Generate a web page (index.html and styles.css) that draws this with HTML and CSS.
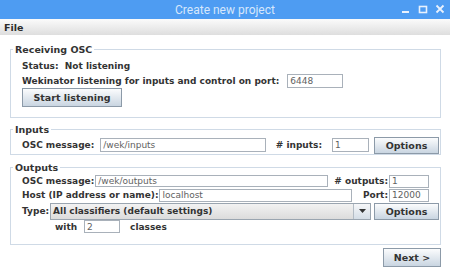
FILE: index.html
```html
<!DOCTYPE html>
<html>
<head>
<meta charset="utf-8">
<link rel="stylesheet" href="styles.css">
</head>
<body>
<div class="window">
  <div class="titlebar">
    <span class="title">Create new project</span>
    <div class="winctl">
      <svg width="10" height="10" viewBox="0 0 10 10"><rect x="1" y="7" width="7" height="2" fill="#e8f1fd"/></svg>
      <svg width="10" height="10" viewBox="0 0 10 10"><rect x="1.5" y="2.5" width="7" height="6" fill="none" stroke="#e8f1fd" stroke-width="1.6"/></svg>
      <svg width="10" height="10" viewBox="0 0 10 10"><path d="M1.5 1.5 L8.5 8.5 M8.5 1.5 L1.5 8.5" stroke="#e8f1fd" stroke-width="1.8"/></svg>
    </div>
  </div>
  <div class="menubar"><span class="menu">File</span></div>
  <div class="content">
    <fieldset class="group g-recv">
      <legend>Receiving OSC</legend>
      <div class="line status">Status:&nbsp; Not listening</div>
      <div class="row r-port">
        <span class="label">Wekinator listening for inputs and control on port:</span>
        <input class="field f-port" type="text" value="6448">
      </div>
      <button class="btn b-start">Start listening</button>
    </fieldset>

    <fieldset class="group g-inputs">
      <legend>Inputs</legend>
      <div class="row r-inputs">
        <span class="label">OSC message:</span>
        <input class="field f-oscin" type="text" value="/wek/inputs">
        <span class="label l-nin"># inputs:</span>
        <input class="field f-nin" type="text" value="1">
        <button class="btn b-opt">Options</button>
      </div>
    </fieldset>

    <fieldset class="group g-outputs">
      <legend>Outputs</legend>
      <div class="row r-out1">
        <span class="label">OSC message:</span>
        <input class="field f-oscout" type="text" value="/wek/outputs">
        <span class="label l-right"># outputs:</span>
        <input class="field f-small" type="text" value="1">
      </div>
      <div class="row r-out2">
        <span class="label">Host (IP address or name):</span>
        <input class="field f-host" type="text" value="localhost">
        <span class="label l-right">Port:</span>
        <input class="field f-small" type="text" value="12000">
      </div>
      <div class="row r-out3">
        <span class="label">Type:</span>
        <div class="combo">
          <span class="combo-text">All classifiers (default settings)</span>
          <span class="combo-arrow"><svg width="7" height="4" viewBox="0 0 7 4"><path d="M0 0 H7 L3.5 4 Z" fill="#333"/></svg></span>
        </div>
        <button class="btn b-opt b-opt2">Options</button>
      </div>
      <div class="row r-out4">
        <span class="label l-with">with</span>
        <input class="field f-classes" type="text" value="2">
        <span class="label l-classes">classes</span>
      </div>
    </fieldset>

    <div class="footer">
      <button class="btn b-next">Next &gt;</button>
    </div>
  </div>
</div>
</body>
</html>
```

FILE: styles.css
```css
* { box-sizing: border-box; }
html, body { margin: 0; padding: 0; }
body {
  width: 450px;
  height: 272px;
  overflow: hidden;
  background: #ffffff;
  font-family: "DejaVu Sans", sans-serif;
  font-size: 9px;
  font-weight: bold;
  color: #333333;
}
.window { width: 450px; height: 272px; display: flex; flex-direction: column; }

.titlebar {
  height: 19px;
  background: #4e9cf2;
  display: flex;
  align-items: center;
  justify-content: center;
  position: relative;
}
.title {
  font-family: Roboto, "DejaVu Sans", sans-serif;
  font-weight: normal;
  font-size: 12px;
  color: #d6e7fc;
}
.winctl {
  position: absolute;
  right: 5px;
  top: 4px;
  display: flex;
  gap: 7px;
}
.winctl svg { display: block; }

.menubar {
  height: 16px;
  background: linear-gradient(#fbfbfb, #dedede);
  display: flex;
  align-items: center;
  padding-left: 4px;
}
.menu { font-size: 9.5px; color: #2c2c2c; }

.content {
  padding: 0 9px 0 10px;
  display: flex;
  flex-direction: column;
}

.group {
  margin: 0;
  border: 1px solid #cfdae6;
  padding: 0 1px 0 11px;
  min-width: 0;
}
.group legend {
  margin-left: -9px;
  padding: 0 2px;
  line-height: 11px;
  font-size: 9.5px;
  color: #333;
}
.g-recv { margin-top: 9px; height: 74px; padding-top: 5px; }
.g-inputs { margin-top: 6px; height: 31px; padding-top: 1px; }
.g-outputs { margin-top: 7px; height: 83px; padding-top: 1px; }

.line { height: 13px; line-height: 13px; }
.row { display: flex; align-items: center; }
.label { white-space: nowrap; }

.field {
  font-family: "DejaVu Sans", sans-serif;
  font-weight: normal;
  font-size: 9px;
  color: #616161;
  border: 1px solid #a9b1ba;
  background: #fff;
  padding: 0 2px;
  margin: 0;
  outline: none;
}

.btn {
  font-family: "DejaVu Sans", sans-serif;
  font-weight: bold;
  font-size: 9.5px;
  color: #333;
  background: linear-gradient(#fbfcfd, #c9d5e1);
  border: 1px solid #8c9aa8;
  border-radius: 0;
  padding: 0;
  margin: 0;
}

.r-port { height: 15px; }
.f-port { margin-left: 8px; width: 56px; height: 14px; }
.b-start { width: 100px; height: 19px; }

.r-inputs { height: 18px; }
.f-oscin { margin-left: 6px; width: 166px; height: 14px; }
.l-nin { margin-left: auto; }
.f-nin { margin-left: 10px; width: 37px; height: 14px; }
.b-opt { margin-left: 5px; width: 65px; height: 17px; }

.r-out1 { height: 14px; }
.r-out2 { height: 14px; }
.r-out3 { height: 18px; }
.r-out4 { height: 13px; }
.f-oscout { margin-left: 1px; width: 233px; height: 12px; }
.l-right { margin-left: auto; }
.f-small { width: 40px; height: 13px; margin-left: 1px; margin-right: 10px; }
.f-host { margin-left: 1px; width: 193px; height: 13px; }

.combo {
  margin-left: 1px;
  flex: 1;
  height: 17px;
  border: 1px solid #9aa5b0;
  background: linear-gradient(#f2f2f2, #dcdcdc);
  display: flex;
  align-items: center;
}
.combo-text { flex: 1; padding-left: 2px; }
.combo-arrow {
  width: 17px;
  height: 15px;
  border-left: 1px solid #b3bcc5;
  background: linear-gradient(#f6f7f9, #d4dde6);
  display: flex;
  align-items: center;
  justify-content: center;
}
.b-opt2 { margin-left: 3px; }

.l-with { margin-left: 33px; }
.f-classes { margin-left: 7px; width: 36px; height: 13px; }
.l-classes { margin-left: 10px; }

.footer { display: flex; justify-content: flex-end; margin-top: 3px; }
.b-next { width: 58px; height: 19px; }
```
